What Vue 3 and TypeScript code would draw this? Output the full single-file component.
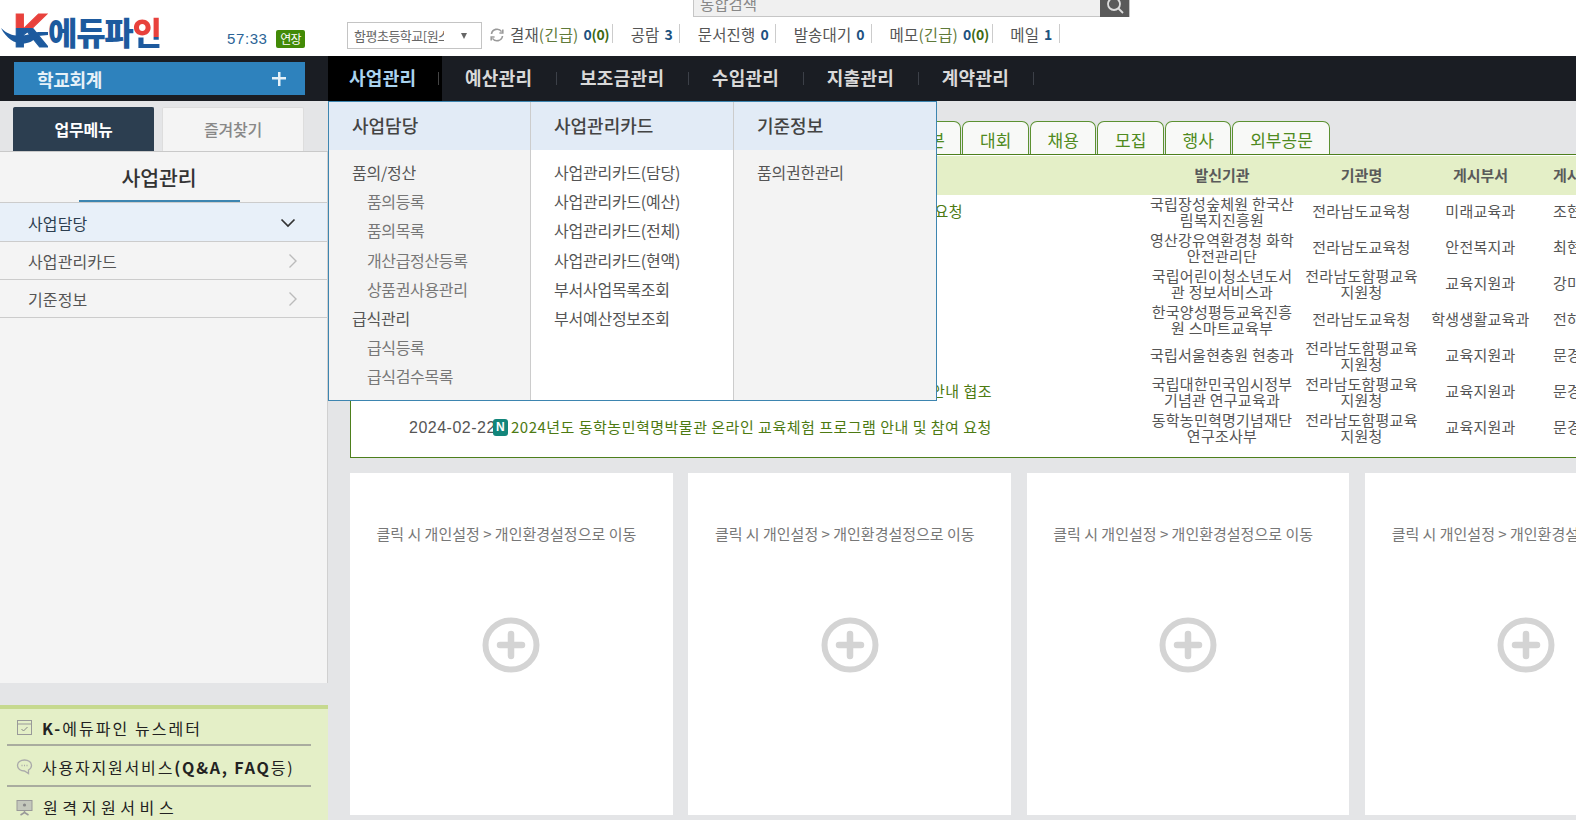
<script setup lang="ts">
interface Row { date: string; isNew: boolean; title: string; short: boolean; sender: string; org: string; dept: string; poster: string }
const status = [
  { label: '결재', urgent: true, count: '0', sub: '0' },
  { label: '공람', urgent: false, count: '3', sub: '' },
  { label: '문서진행', urgent: false, count: '0', sub: '' },
  { label: '발송대기', urgent: false, count: '0', sub: '' },
  { label: '메모', urgent: true, count: '0', sub: '0' },
  { label: '메일', urgent: false, count: '1', sub: '' }
]
const navs = ['사업관리', '예산관리', '보조금관리', '수입관리', '지출관리', '계약관리']
const sideItems = ['사업담당', '사업관리카드', '기준정보']
const tabs = ['대회', '채용', '모집', '행사', '외부공문']
const hq = '전라남도교육청'
const hp = '전라남도함평교육\n지원청'
const rows: Row[] = [
  { date: '', isNew: false, title: '요청', short: true, sender: '국립장성숲체원 한국산\n림복지진흥원', org: hq, dept: '미래교육과', poster: '조현' },
  { date: '', isNew: false, title: '', short: false, sender: '영산강유역환경청 화학\n안전관리단', org: hq, dept: '안전복지과', poster: '최현' },
  { date: '', isNew: false, title: '', short: false, sender: '국립어린이청소년도서\n관 정보서비스과', org: hp, dept: '교육지원과', poster: '강미' },
  { date: '', isNew: false, title: '', short: false, sender: '한국양성평등교육진흥\n원 스마트교육부', org: hq, dept: '학생생활교육과', poster: '전하' },
  { date: '', isNew: false, title: '', short: false, sender: '국립서울현충원 현충과', org: hp, dept: '교육지원과', poster: '문경' },
  { date: '', isNew: false, title: '안내 협조', short: false, sender: '국립대한민국임시정부\n기념관 연구교육과', org: hp, dept: '교육지원과', poster: '문경' },
  { date: '2024-02-22', isNew: true, title: '2024년도 동학농민혁명박물관 온라인 교육체험 프로그램 안내 및 참여 요청', short: false, sender: '동학농민혁명기념재단\n연구조사부', org: hp, dept: '교육지원과', poster: '문경' }
]
const menuColumns = [
  { head: '사업담당', tone: 'gray', items: [
    { t: '품의/정산', sub: false }, { t: '품의등록', sub: true }, { t: '품의목록', sub: true }, { t: '개산급정산등록', sub: true },
    { t: '상품권사용관리', sub: true }, { t: '급식관리', sub: false }, { t: '급식등록', sub: true }, { t: '급식검수목록', sub: true }
  ] },
  { head: '사업관리카드', tone: 'white', items: [
    { t: '사업관리카드(담당)', sub: false }, { t: '사업관리카드(예산)', sub: false }, { t: '사업관리카드(전체)', sub: false },
    { t: '사업관리카드(현액)', sub: false }, { t: '부서사업목록조회', sub: false }, { t: '부서예산정보조회', sub: false }
  ] },
  { head: '기준정보', tone: 'gray', items: [{ t: '품의권한관리', sub: false }] }
]
const isMulti = (s: string) => s.includes('\n')
</script>

<template>
  <div class="page">
    <header class="top">
      <div class="logo">
        <svg class="swoosh" width="50" height="40" viewBox="0 0 50 40">
          <path d="M1 14 C8 21 16 23 26 21 L38 18 L48 18 L48 21 L38 22 C28 34 10 32 1 14 Z" fill="#1d5a9e" />
        </svg>
        <span class="k">K</span><span class="logo-word">에듀파<span class="logo-red">인</span></span>
      </div>
      <div class="timer">57:33</div>
      <div class="extend">연장</div>
      <div class="select"><span class="select-text">함평초등학교[원스</span><span class="select-arrow"></span></div>
      <svg class="refresh" width="16" height="16" viewBox="0 0 16 16" fill="none" stroke="#9a9a9a" stroke-width="1.6">
        <path d="M2.5 7A5.6 5.6 0 0 1 12.6 4.6" /><path d="M13.5 9A5.6 5.6 0 0 1 3.4 11.4" />
        <path d="M13.8 2.4V6H10.4" /><path d="M2.2 13.6V10H5.6" />
      </svg>
      <ul class="status">
        <li v-for="s in status" :key="s.label">
          <span>{{ s.label }}</span><span v-if="s.urgent" class="urgent">(긴급)</span>
          <b class="count">{{ s.count }}</b><b v-if="s.sub" class="count-sub">({{ s.sub }})</b>
        </li>
      </ul>
      <div class="search">
        <span class="search-label">통합검색</span>
        <span class="search-btn">
          <svg width="20" height="20" viewBox="0 0 20 20" fill="none" stroke="#ddd" stroke-width="1.8"><circle cx="9" cy="8" r="6" /><path d="M13.5 12.5L18 17" /></svg>
        </span>
      </div>
    </header>

    <nav class="navbar">
      <div class="nav-left">
        <div class="school-btn"><span>학교회계</span><span class="school-plus"></span></div>
      </div>
      <ul class="nav-list">
        <li v-for="(n, i) in navs" :key="n" :class="{ active: i === 0 }">{{ n }}</li>
      </ul>
    </nav>

    <div class="body">
      <aside class="side">
        <div class="side-tabs">
          <div class="side-tab on">업무메뉴</div>
          <div class="side-tab">즐겨찾기</div>
        </div>
        <div class="side-panel">
          <div class="side-title"><span>사업관리</span></div>
          <div v-for="(s, i) in sideItems" :key="s" class="side-item" :class="{ open: i === 0 }">
            <span>{{ s }}</span>
            <svg v-if="i === 0" width="16" height="10" viewBox="0 0 16 10" fill="none" stroke="#333" stroke-width="1.7"><path d="M1.5 1.5L8 8l6.5-6.5" /></svg>
            <svg v-else class="chev" width="10" height="16" viewBox="0 0 10 16" fill="none" stroke="#bbb" stroke-width="1.4"><path d="M1.5 1.5L8 8l-6.5 6.5" /></svg>
          </div>
        </div>
        <div class="side-links">
          <div class="link first">
            <svg width="17" height="17" viewBox="0 0 17 17" fill="none" stroke="#999"><rect x="1.5" y="1.5" width="14" height="14" /><path d="M1.5 5h14" /><path d="M5.5 10l2 2 4-4" stroke="#888" /></svg>
            <span><b>K-</b>에듀파인 뉴스레터</span>
          </div>
          <div class="link second">
            <svg width="17" height="17" viewBox="0 0 17 17" fill="none" stroke="#aaa" stroke-width="1.3"><path d="M8.5 2C4.5 2 1.5 4.4 1.5 7.5S4.500 13 8.500 13l4 2.500v-3.500c1.800-1 3-2.700 3-4.500C15.500 4.400 12.500 2 8.500 2z" /><path d="M5.500 7.500h1M8 7.500h1M10.500 7.500h1" /></svg>
            <span>사용자지원서비스<b>(Q&amp;A, FAQ</b>등)</span>
          </div>
          <div class="link wide">
            <svg width="17" height="17" viewBox="0 0 17 17" fill="none" stroke="#999"><rect x="1" y="1.500" width="15" height="10" fill="#c4c8bc" /><path d="M8.500 11.500V14M4.500 16l4-2.500 4 2.500" stroke-width="1.500" /><circle cx="8.500" cy="6" r="1.600" fill="#888" stroke="none" /></svg>
            <span>원격지원서비스</span>
          </div>
        </div>
      </aside>

      <main class="main">
        <div class="tabs">
          <div class="tab tab-hidden">본</div>
          <div v-for="t in tabs" :key="t" class="tab">{{ t }}</div>
        </div>
        <section class="board">
          <div class="board-head">
            <span class="c-main"></span>
            <span class="c-sender">발신기관</span>
            <span class="c-org">기관명</span>
            <span class="c-dept">게시부서</span>
            <span class="c-poster">게시</span>
          </div>
          <div v-for="(r, i) in rows" :key="i" class="board-row">
            <div class="c-main" :class="{ tail: !r.isNew }">
              <span v-if="r.date" class="date">{{ r.date }}</span>
              <span v-if="r.isNew" class="new">N</span>
              <span class="title" :class="{ short: r.short }">{{ r.title }}</span>
            </div>
            <span class="c-sender" :class="{ multi: isMulti(r.sender) }">{{ r.sender }}</span>
            <span class="c-org" :class="{ multi: isMulti(r.org) }">{{ r.org }}</span>
            <span class="c-dept">{{ r.dept }}</span>
            <span class="c-poster">{{ r.poster }}</span>
          </div>
        </section>
        <section class="cards">
          <div v-for="n in 4" :key="n" class="card">
            <p>클릭 시 개인설정 &gt; 개인환경설정으로 이동</p>
            <svg class="card-plus" width="58" height="56" viewBox="0 0 58 56" fill="none" stroke="#d4d4d4">
              <ellipse cx="29" cy="28" rx="25.500" ry="24.500" stroke-width="6" />
              <path d="M18 28H40M29 17V39" stroke-width="6.500" stroke-linecap="round" />
            </svg>
          </div>
        </section>
      </main>
    </div>

    <div class="mega">
      <div v-for="c in menuColumns" :key="c.head" class="mega-col" :class="c.tone">
        <div class="mega-head">{{ c.head }}</div>
        <ul>
          <li v-for="it in c.items" :key="it.t" :class="{ sub: it.sub }">{{ it.t }}</li>
        </ul>
      </div>
    </div>
  </div>
</template>

<style>
html, body { margin: 0; overflow: hidden; background: #fff; }
</style>

<style scoped>
* { box-sizing: border-box; }
ul { list-style: none; margin: 0; padding: 0; }
.page {
  position: relative; width: 1576px; height: 820px; overflow: hidden; background: #e4e5e7;
  font-family: "Noto Sans CJK KR", "Noto Sans", sans-serif; color: #555;
}
.top { position: relative; height: 56px; background: #fff; display: flex; align-items: flex-start; }

.logo { position: relative; width: 227px; height: 56px; flex: none; }
.swoosh { position: absolute; left: 0; top: 14px; z-index: 1; }
.k {
  position: absolute; left: 13px; top: 2px; font: 900 49px/56px "Liberation Sans", sans-serif;
  background: linear-gradient(180deg, #e8413c 0 46%, #1d5a9e 46%); -webkit-background-clip: text; background-clip: text; color: transparent;
  -webkit-text-stroke: 1.200px transparent;
}
.logo-word {
  position: absolute; left: 48px; top: 8px; font-size: 32px; line-height: 46px; font-weight: 900; color: #1d5a9e; letter-spacing: -1.300px; white-space: nowrap;
}
.logo-red { background: linear-gradient(180deg, #e8413c 0 62%, #1d5a9e 62%); -webkit-background-clip: text; background-clip: text; color: transparent; }
.timer { margin-top: 30px; width: 49px; font: 15px/18px "Liberation Sans", sans-serif; letter-spacing: 0.6px; color: #2b6496; }
.extend { margin-top: 30px; width: 29px; height: 18px; border-radius: 2px; background: #428a06; color: #fff; font-size: 12px; line-height: 18px; text-align: center; letter-spacing: -0.8px; }
.select {
  margin: 22px 0 0 42px; width: 135px; height: 27px; border: 1px solid #c4c4c4; padding-left: 6px;
  display: flex; align-items: center; font-size: 13px; letter-spacing: -0.5px; color: #666;
}
.select-text { width: 90px; overflow: hidden; white-space: nowrap; }
.select-arrow { margin-left: 17px; border: 3.500px solid transparent; border-top: 6px solid #666; border-bottom: 0; }
.refresh { margin: 27px 0 0 7px; flex: none; }
.status { display: flex; gap: 17.300px; margin: 24px 0 0 5px; font-size: 15.500px; line-height: 20px; letter-spacing: 0.15px; }
.status li { display: flex; gap: 0; align-items: center; color: #555; white-space: nowrap; padding-right: 7px; border-right: 1px solid #ccc; height: 19px; }
.urgent { color: #5f7a3a; }
.count { color: #1d5280; margin-left: 5px; font-weight: 700; font-size: 14px; letter-spacing: -0.3px; }
.count-sub { color: #3d6b12; font-weight: 700; font-size: 14px; letter-spacing: -0.3px; margin-right: -4px; }
.search {
  position: absolute; left: 693px; top: -16px; width: 437px; height: 33px; background: #f0f0f0;
  border: 1px solid #c6c6c6; border-top: 0; display: flex; align-items: center; justify-content: space-between; padding-left: 6px;
}
.search-label { color: #888; font-size: 15.500px; margin-top: 6px; }
.search-btn { width: 29px; height: 33px; background: #5a5a5a; display: flex; align-items: flex-end; justify-content: center; padding-bottom: 1px; }

.navbar { height: 45px; background: #1a1d23; display: flex; }
.nav-left { width: 328px; flex: none; padding: 6px 23px 0 14px; }
.school-btn {
  height: 33px; background: #2e82bd; color: #e6f1f8; font-size: 18px; font-weight: 700; display: flex; align-items: center;
  justify-content: space-between; padding: 0 19px 0 23px; letter-spacing: -0.3px;
}
.school-plus { position: relative; width: 14px; height: 14px; background: linear-gradient(#e6f1f8, #e6f1f8) center/14px 2.500px no-repeat, linear-gradient(#e6f1f8, #e6f1f8) center/2.500px 14px no-repeat; }
.nav-list { display: flex; font-size: 18px; font-weight: 700; color: #d9d9d9; letter-spacing: 0.3px; line-height: 43px; }
.nav-list li { position: relative; padding: 0 24.500px 0 23px; }
.nav-list li::after { content: ""; position: absolute; right: 0; top: 16px; height: 13px; width: 1px; background: #3c4048; }
.nav-list li.active { background: #000; color: #a9d3ef; padding: 0 26px 0 21px; width: 114px; white-space: nowrap; }
.nav-list li.active::after { right: 3px; background: #444; }

.body { display: flex; height: 719px; }
.side { width: 328px; flex: none; display: flex; flex-direction: column; }
.side-tabs { height: 50px; flex: none; display: flex; gap: 8px; padding: 6px 0 0 13px; }
.side-tab {
  width: 142px; height: 44px; background: #f4f4f4; border: 1px solid #ddd; border-bottom: 0; border-radius: 2px 2px 0 0;
  text-align: center; line-height: 43px; font-size: 16px; font-weight: 500; color: #888; letter-spacing: -0.2px;
}
.side-tab.on { background: #2c3e50; border-color: #2c3e50; color: #fff; font-weight: 700; width: 141px; }
.side-panel { height: 532px; flex: none; background: #f4f4f4; border-top: 1px solid #c9c9c9; border-right: 1px solid #d0d0d0; width: 328px; }
.side-title { height: 51px; display: flex; justify-content: center; font-size: 20.500px; color: #333; font-weight: 500; line-height: 51px; border-bottom: 1px solid #ccc; letter-spacing: -0.1px; }
.side-title span { width: 161px; margin-right: 9px; text-align: center; border-bottom: 2px solid #3d85b0; height: 50px; }
.side-item { height: 38px; display: flex; align-items: center; justify-content: space-between; padding: 0 31px 0 28px; font-size: 16px; color: #555; border-bottom: 1px solid #ccc; letter-spacing: 0.1px; }
.side-item.open { background: #e8f0f9; color: #2c3e50; height: 39px; padding-top: 1px; }
.chev { margin-right: -2px; }
.side-links { margin-top: 22px; flex: 1; background: #e4efc7; border-top: 4px solid #c6d98f; padding: 5px 17px 0 7px; font-size: 16px; color: #222; }
.link { height: 39px; display: flex; align-items: center; gap: 9px; padding-left: 9px; border-bottom: 2px solid #a9ac9f; letter-spacing: 1.800px; white-space: nowrap; font-weight: 400; }
.link.first { height: 32px; padding-bottom: 3px; letter-spacing: 2.050px; }
.link.second { height: 41px; padding-top: 2px; }
.link b { font-weight: 700; }
.link.wide { border-bottom: 0; letter-spacing: 4.600px; height: 40px; gap: 10px; }

.main { flex: 1; min-width: 0; padding: 20px 0 0 22px; }
.tabs { display: flex; height: 33px; margin-left: 515px; gap: 1px; }
.tab {
  width: 66.500px; height: 33px; padding-left: 1px; background: #f8f9f7; border: 1.500px solid #5c9131; border-bottom: 0; border-radius: 7px 7px 0 0;
  color: #4f8a20; text-align: center; line-height: 36px; font-size: 17px;
}
.tab:last-child { width: 98px; }
.tab-hidden { width: 96px; flex: none; text-align: right; padding-right: 15px; }
.board { width: 1300px; height: 304px; background: #fff; border: 1px solid #4d7f1c; border-right: 0; }
.board-head, .board-row { display: grid; grid-template-columns: 795px 152px 127px 111px 114px; align-items: center; text-align: center; }
.board-head { height: 39px; padding-bottom: 3px; background: #e4efc7; font-size: 15px; font-weight: 700; color: #5a5a5a; margin: 1px 0 -2px; letter-spacing: 0; }
.board-row { height: 36px; font-size: 15px; line-height: 16px; color: #555; letter-spacing: 0.25px; white-space: pre-line; }
.multi { padding-top: 2px; }
.c-poster { text-align: left; padding-left: 17px; white-space: nowrap; }
.c-main { display: flex; align-items: center; text-align: left; padding-left: 58px; white-space: nowrap; }
.c-main.tail { justify-content: flex-end; padding-right: 154px; }
.date { font: 16px/16px "Liberation Sans", sans-serif; width: 84px; padding-top: 1px; letter-spacing: 0.500px; flex: none; color: #555; }
.new { position: relative; width: 15px; height: 17px; border-radius: 3px; background: #12857a; color: #fff; font: 700 12px/17px "Liberation Sans", sans-serif; text-align: center; flex: none; }
.title { color: #4d7a12; margin-left: 3px; font-size: 15px; letter-spacing: 0.500px; }
.title.short { margin-right: 29px; }
.cards { display: grid; grid-template-columns: repeat(4, 322.700px); gap: 15.700px; margin-top: 15px; height: 342px; }
.card { background: #fff; position: relative; padding-top: 50px; }
.card p { margin: 0; padding-left: 26.500px; font-size: 15px; line-height: 22px; color: #777; white-space: nowrap; }
.card-plus { display: block; margin: 72px auto 0; }

.mega {
  position: absolute; left: 328px; top: 101px; width: 609px; height: 300px; display: flex; background: #fff;
  border: 1px solid #3d85b0; z-index: 5;
}
.mega-col { flex: 1; border-right: 1px solid #ccc; }
.mega-col:first-child { width: 202px; flex: none; }
.mega-col:nth-child(2) { width: 203px; flex: none; }
.mega-col:last-child { border-right: 0; }
.mega-col.gray { background: #f3f3f3; }
.mega-col.white { background: #fff; }
.mega-head { height: 48px; background: #e2ebf6; padding-left: 23px; line-height: 47px; font-size: 18px; color: #444; font-weight: 500; }
.mega ul { padding: 8px 0 0 23px; }
.mega li { height: 29.200px; line-height: 29px; font-size: 16px; color: #555; white-space: nowrap; letter-spacing: -0.250px; }
.mega li.sub { padding-left: 15px; color: #777; letter-spacing: -0.350px; }
</style>
